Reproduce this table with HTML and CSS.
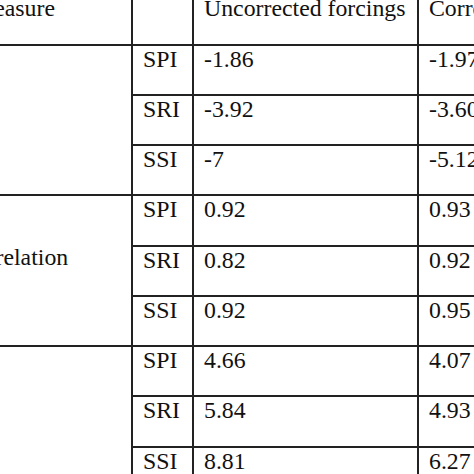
FILE: index.html
```html
<!DOCTYPE html>
<html>
<head>
<meta charset="utf-8">
<link rel="stylesheet" href="styles.css">
</head>
<body>
<div class="table">
  <div class="cell c1 head">Measure</div>
  <div class="cell c2 head"></div>
  <div class="cell c3 head">Uncorrected forcings</div>
  <div class="cell c4 head">Corrected forcings</div>

  <div class="cell c1 group"></div>
  <div class="cell c2">SPI</div><div class="cell c3">-1.86</div><div class="cell c4">-1.97</div>
  <div class="cell c2">SRI</div><div class="cell c3">-3.92</div><div class="cell c4">-3.60</div>
  <div class="cell c2">SSI</div><div class="cell c3">-7</div><div class="cell c4">-5.12</div>

  <div class="cell c1 group"><span class="group-label">Correlation</span></div>
  <div class="cell c2">SPI</div><div class="cell c3">0.92</div><div class="cell c4">0.93</div>
  <div class="cell c2">SRI</div><div class="cell c3">0.82</div><div class="cell c4">0.92</div>
  <div class="cell c2">SSI</div><div class="cell c3">0.92</div><div class="cell c4">0.95</div>

  <div class="cell c1 group"></div>
  <div class="cell c2">SPI</div><div class="cell c3">4.66</div><div class="cell c4">4.07</div>
  <div class="cell c2">SRI</div><div class="cell c3">5.84</div><div class="cell c4">4.93</div>
  <div class="cell c2">SSI</div><div class="cell c3">8.81</div><div class="cell c4">6.27</div>
</div>
</body>
</html>
```
FILE: styles.css
```css
html, body {
  margin: 0;
  padding: 0;
  background: #ffffff;
  overflow: hidden;
}

body {
  width: 474px;
  height: 474px;
  font-family: "Liberation Serif", "Times New Roman", serif;
  font-size: 23.8px;
  line-height: 27px;
  color: #111111;
}

.table {
  display: grid;
  grid-template-columns: 236px 61px 225px 220px;
  grid-template-rows: 50.5px repeat(9, 50.25px);
  margin-left: -103px;
  margin-top: -5px;
  width: max-content;
}

.cell {
  border-right: 2px solid #222222;
  border-bottom: 2px solid #222222;
  padding: 0 0 0 10px;
  white-space: nowrap;
}

.c1 {
  grid-column: 1;
  padding-left: 0;
  text-align: center;
}

.c2 { grid-column: 2; }
.c3 { grid-column: 3; }
.c4 { grid-column: 4; }

.group {
  grid-row: span 3;
}

.group-label {
  display: block;
  padding-top: 48px;
}
```
